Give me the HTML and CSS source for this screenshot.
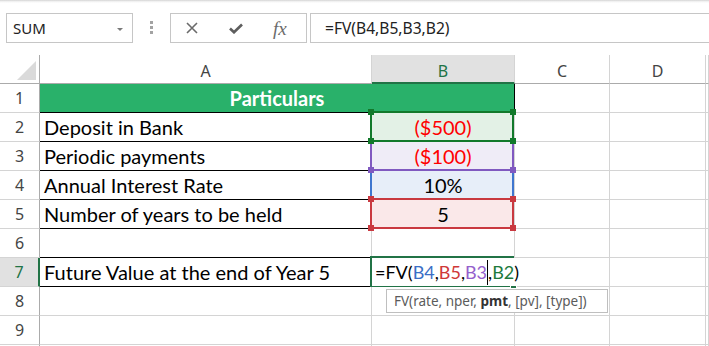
FILE: index.html
```html
<!DOCTYPE html>
<html lang="en">
<head>
<meta charset="UTF-8">
<meta name="viewport" content="width=device-width, initial-scale=1.0">
<title>FV formula</title>
<link rel="stylesheet" href="styles.css">
</head>
<body>
<div class="fbar">
    <div class="namebox"><span>SUM</span><span class="caret"></span></div>
    <div class="grip"><i></i><i></i><i></i></div>
    <div class="fnbox">
        <svg width="14" height="12" viewBox="0 0 14 12"><path d="M2 1 L12 11 M12 1 L2 11" stroke="#6b6b6b" stroke-width="1.6" fill="none"/></svg>
        <svg width="14" height="11" viewBox="0 0 14 11"><path d="M1 5.5 L5 9.3 L13 1.5" stroke="#5e5e5e" stroke-width="2.6" fill="none"/></svg>
        <span class="fx">fx</span>
    </div>
    <div class="formula">=FV(B4,B5,B3,B2)</div>
</div>

<div class="sheet">
    <div class="c corner"></div>
    <div class="c hd">A</div>
    <div class="c hd hd-sel">B</div>
    <div class="c hd">C</div>
    <div class="c hd">D</div>
    <div class="c hd"></div>

    <div class="c rh">1</div>
    <div class="c title">Particulars</div>
    <div class="c"></div>
    <div class="c"></div>
    <div class="c"></div>

    <div class="c rh">2</div>
    <div class="c lbl">Deposit in Bank</div>
    <div class="c ref ref-green neg">($500)</div>
    <div class="c"></div>
    <div class="c"></div>
    <div class="c"></div>

    <div class="c rh">3</div>
    <div class="c lbl">Periodic payments</div>
    <div class="c ref ref-purple neg">($100)</div>
    <div class="c"></div>
    <div class="c"></div>
    <div class="c"></div>

    <div class="c rh">4</div>
    <div class="c lbl">Annual Interest Rate</div>
    <div class="c ref ref-blue">10%</div>
    <div class="c"></div>
    <div class="c"></div>
    <div class="c"></div>

    <div class="c rh">5</div>
    <div class="c lbl">Number of years to be held</div>
    <div class="c ref ref-red">5</div>
    <div class="c"></div>
    <div class="c"></div>
    <div class="c"></div>

    <div class="c rh">6</div>
    <div class="c lbl"></div>
    <div class="c"></div>
    <div class="c"></div>
    <div class="c"></div>
    <div class="c"></div>

    <div class="c rh rh-sel">7</div>
    <div class="c lbl">Future Value at the end of Year 5</div>
    <div class="c active">
        <span class="editor">=FV(<span class="k-blue">B4</span>,<span class="k-red">B5</span>,<span class="k-purple">B3</span><span class="cursor"></span>,<span class="k-green">B2</span>)</span>
        <div class="tip">FV(rate, nper, <b>pmt</b>, [pv], [type])</div>
    </div>
    <div class="c"></div>
    <div class="c"></div>
    <div class="c"></div>

    <div class="c rh">8</div>
    <div class="c"></div>
    <div class="c"></div>
    <div class="c"></div>
    <div class="c"></div>
    <div class="c"></div>

    <div class="c rh">9</div>
    <div class="c"></div>
    <div class="c"></div>
    <div class="c"></div>
    <div class="c"></div>
    <div class="c"></div>

    <div class="c rh"></div>
    <div class="c"></div>
    <div class="c"></div>
    <div class="c"></div>
    <div class="c"></div>
    <div class="c"></div>
</div>
</body>
</html>
```

FILE: styles.css
```css
body {
    margin: 0;
    height: 346px;
    overflow: hidden;
    background-color: #fff;
    font-family: "Noto Sans", sans-serif;
}

/* formula bar */
.fbar {
    height: 55px;
    box-sizing: border-box;
    padding: 13px 0 0 6px;
    display: flex;
    align-items: flex-start;
    background: linear-gradient(#cfcfcf, #ececec 1px, #fff 3px);
}
.namebox, .fnbox, .formula {
    height: 30px;
    box-sizing: border-box;
    border: 1px solid #c6c6c6;
    display: flex;
    align-items: center;
}
.namebox {
    width: 127px;
    padding-left: 6px;
    font-size: 15px;
    color: #222;
    justify-content: space-between;
}
.caret {
    margin-right: 9px;
    margin-top: 2px;
    border-left: 3px solid transparent;
    border-right: 3px solid transparent;
    border-top: 3px solid #7a7a7a;
}
.grip {
    width: 37px;
    padding-top: 8px;
    display: flex;
    flex-direction: column;
    align-items: center;
    gap: 2px;
}
.grip i {
    display: block;
    width: 3px;
    height: 3px;
    background-color: #a3a3a3;
}
.fnbox {
    width: 137px;
    padding-left: 14px;
    gap: 30px;
}
.fx {
    font-family: "Liberation Serif", serif;
    font-style: italic;
    font-size: 19px;
    color: #6b6b6b;
    margin-top: 1px;
}
.formula {
    flex: 1;
    margin-left: 3px;
    margin-right: -2px;
    padding-left: 14px;
    font-size: 15.6px;
    color: #222;
}

/* sheet grid */
.sheet {
    height: 291px;
    overflow: hidden;
    display: grid;
    grid-template-columns: 40px 332px 143px 95px 96px 1fr;
    grid-auto-rows: 29px;
}
.c {
    box-sizing: border-box;
    border-right: 1px solid #d4d4d4;
    border-bottom: 1px solid #d4d4d4;
    white-space: nowrap;
    font-family: Lato, sans-serif;
    font-size: 20px;
    line-height: 28px;
    color: #000;
}
.hd, .rh {
    font-family: "Noto Sans", sans-serif;
    font-size: 16px;
    color: #444;
    text-align: center;
}
.hd {
    border-bottom-color: #ababab;
    padding-top: 2px;
}
.hd-sel {
    background-color: #e1e1e1;
    border-bottom: 2px solid #217346;
    color: #217346;
}
.rh {
    border-right-color: #ababab;
}
.rh-sel {
    background-color: #e1e1e1;
    border-right: 2px solid #217346;
    color: #217346;
}
.corner {
    border-bottom-color: #ababab;
    border-right-color: #ababab;
    display: flex;
    justify-content: flex-end;
    align-items: flex-end;
    padding: 0 3px 3px 0;
}
.corner::after {
    content: "";
    width: 19px;
    height: 19px;
    background-color: #dadada;
    clip-path: polygon(100% 0, 100% 100%, 0 100%);
}
.title {
    grid-column: span 2;
    background-color: #29b16a;
    color: #fff;
    font-weight: bold;
    text-align: center;
    border-bottom-color: #000;
    border-right-color: #000;
}
.lbl {
    padding-left: 4px;
    border-bottom-color: #000;
}

/* highlighted references in column B */
.ref {
    position: relative;
    text-align: center;
}
.ref::before {
    content: "";
    position: absolute;
    inset: -2px 0 -1px -2px;
    border: 2px solid var(--line);
}
.ref::after {
    content: "";
    position: absolute;
    inset: -4px -2px -3px -4px;
    background:
        linear-gradient(var(--line), var(--line)) left top / 6px 6px no-repeat,
        linear-gradient(var(--line), var(--line)) right top / 6px 6px no-repeat,
        linear-gradient(var(--line), var(--line)) left bottom / 6px 6px no-repeat,
        linear-gradient(var(--line), var(--line)) right bottom / 6px 6px no-repeat;
}
.ref-green { --line: #12792b; background-color: #e3f1e6; z-index: 4; }
.ref-purple { --line: #8059c0; background-color: #efecf7; z-index: 3; }
.ref-blue { --line: #3f76cf; background-color: #e7eef9; z-index: 1; }
.ref-red { --line: #c93940; background-color: #fae8e9; z-index: 2; }
.neg {
    color: #ff0000;
}

/* cell being edited */
.active {
    position: relative;
    z-index: 5;
}
.active::before {
    content: "";
    position: absolute;
    inset: -2px 0 -1px -2px;
    border: 2px solid #217346;
    border-right: none;
}
.active::after {
    content: "";
    position: absolute;
    right: -3px;
    bottom: -3px;
    width: 5px;
    height: 5px;
    background-color: #217346;
    border: 1px solid #fff;
}
.editor {
    position: absolute;
    left: 0;
    top: 0;
    padding: 0 4px 0 3px;
    background-color: #fff;
    font-size: 18px;
    z-index: 1;
}
.k-blue { color: #3a6fc6; }
.k-red { color: #cf3838; }
.k-purple { color: #9460cc; }
.k-green { color: #1d7a3c; }
.cursor {
    display: inline-block;
    width: 0;
    height: 25px;
    vertical-align: -6px;
    border-left: 1px solid #000;
}
.tip {
    position: absolute;
    left: 14px;
    top: 31px;
    width: 222px;
    height: 24px;
    box-sizing: border-box;
    padding-left: 7px;
    border: 1px solid #bfbfbf;
    background-color: #fff;
    font-family: "Noto Sans", sans-serif;
    font-size: 13.5px;
    line-height: 22px;
    color: #5b5b5b;
    z-index: 2;
}
.tip b {
    color: #333;
}
```
